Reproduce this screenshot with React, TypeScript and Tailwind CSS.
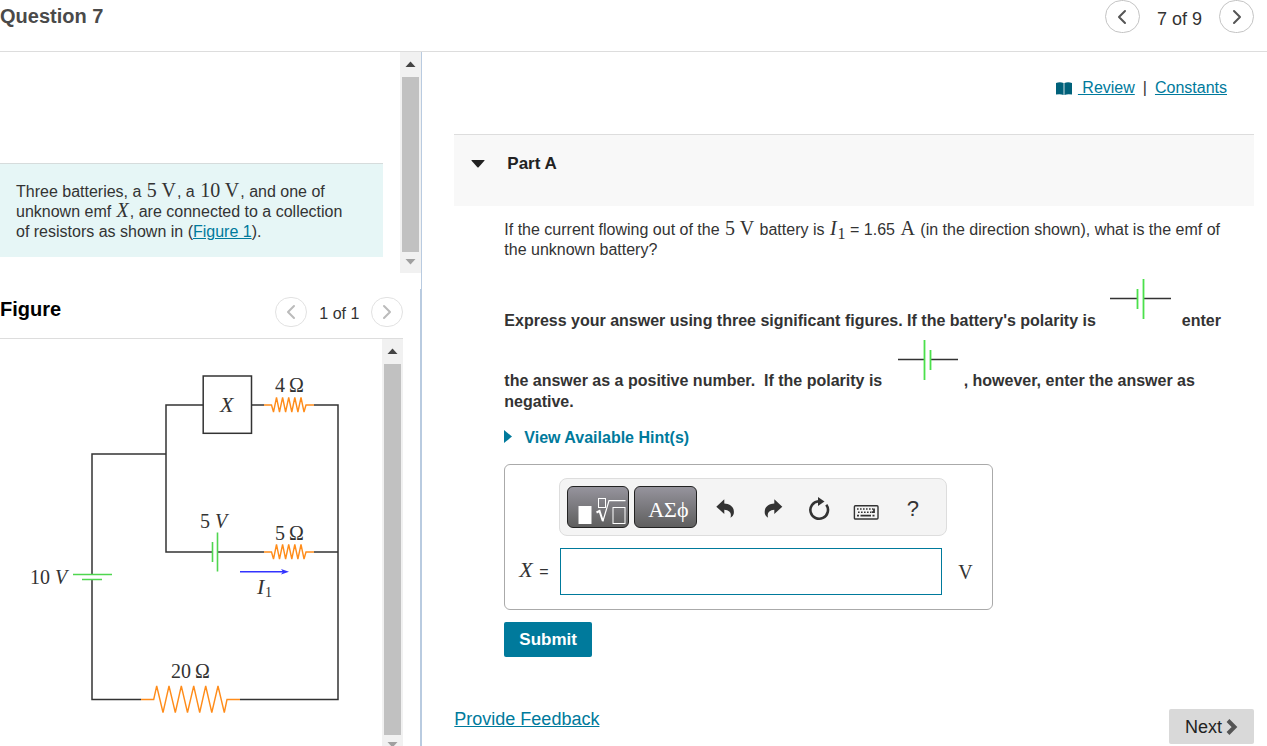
import React, { useState } from 'react';
import { ChevronLeft, ChevronRight } from 'lucide-react';

export default function App() {
  return (
    <div className="flex min-h-screen flex-col bg-white font-['Liberation_Sans',Arial,sans-serif] text-base leading-5 text-[#333]">
      <Header />
      <main className="flex flex-1">
        <aside className="flex w-1/3 shrink-0 flex-col border-r border-[#b9cbe0]">
          <Problem />
          <Figure />
        </aside>
        <Question />
      </main>
    </div>
  );
}

function Header() {
  return (
    <header className="flex h-[52px] items-start justify-between border-b border-[#ddd] pr-[13px]">
      <h1 className="pt-1 text-xl leading-6 font-bold text-[#4a4a4a]">Question 7</h1>
      <nav className="flex items-center gap-[17px] text-lg">
        <PagerButton label="Previous question" direction="left" />
        <span className="pt-1">7 of 9</span>
        <PagerButton label="Next question" direction="right" />
      </nav>
    </header>
  );
}

function PagerButton({ label, direction }: { label: string, direction: 'left' | 'right' }) {
  const Icon = direction === 'left' ? ChevronLeft : ChevronRight;

  return (
    <button aria-label={label} className="flex h-[33px] w-[35px] items-center justify-center rounded-full border border-[#c4c4c4] bg-white text-[#555]">
      <Icon size={24} strokeWidth={2} />
    </button>
  );
}

function ScrollBar({ cut = false }: { cut?: boolean }) {
  return (
    <div className="flex w-[21px] shrink-0 flex-col items-center bg-[#f1f1f1]">
      <svg width="21" height="25" viewBox="0 0 21 25" className="shrink-0">
        <path d="M5.5 15 L10.5 9.5 L15.5 15 Z" fill="#444" />
      </svg>
      <div className="w-[17px] flex-1 bg-[#c1c1c1]" />
      <svg width="21" height={cut ? 11 : 21} viewBox={cut ? '0 0 21 11' : '0 0 21 21'} className="shrink-0">
        <path d="M5.5 7 L15.5 7 L10.5 12.5 Z" fill="#a0a0a0" />
      </svg>
    </div>
  );
}

// quantities are set in serif, zero leading keeps them from growing the line
function Num({ children }: { children: React.ReactNode }) {
  return <span className="px-px font-['Liberation_Serif',serif] text-xl leading-0">{children}</span>;
}

function Problem() {
  return (
    <section className="flex h-[221px]">
      <div className="flex-1 pt-[111px] pr-[17px]">
        <p className="border-t border-[#d6dcdc] bg-[#e6f6f6] pt-[18px] pr-7 pb-[15px] pl-4">
          Three batteries, a <Num>5 V</Num>, a <Num>10 V</Num>, and one of unknown emf <Num><i>X</i></Num>, are connected to a collection of resistors as shown in (<a href="#figure" className="text-[#007a9c] underline">Figure 1</a>).
        </p>
      </div>
      <ScrollBar />
    </section>
  );
}

function Figure() {
  return (
    <section id="figure" className="mt-4 flex flex-1 flex-col border-r border-[#b9cbe0] pr-[17px]">
      <div className="flex h-[50px] items-start justify-between border-b border-[#ddd] pt-2">
        <h2 className="text-xl leading-6 font-bold text-black">Figure</h2>
        <div className="flex items-center gap-3">
          <FigureButton label="Previous figure" direction="left" />
          <span className="pt-1">1 of 1</span>
          <FigureButton label="Next figure" direction="right" />
        </div>
      </div>
      <div className="flex flex-1">
        <div className="flex-1">
          <Circuit />
        </div>
        <ScrollBar cut />
      </div>
    </section>
  );
}

function FigureButton({ label, direction }: { label: string, direction: 'left' | 'right' }) {
  const Icon = direction === 'left' ? ChevronLeft : ChevronRight;

  return (
    <button aria-label={label} className="flex h-[30px] w-8 items-center justify-center rounded-full border border-[#e2e2e2] bg-white text-[#bbb]">
      <Icon size={24} strokeWidth={2} />
    </button>
  );
}

function Circuit() {
  return (
    <svg width="382" height="400" viewBox="0 0 382 400" fill="none" role="img" aria-label="Circuit diagram" className="block">
      <g stroke="#333" strokeWidth="1.5">
        <rect x="203.2" y="37" width="48.3" height="57.3" />
        <path d="M203 66 H166 V213 H212.5" />
        <path d="M251.5 66 H264" />
        <path d="M314 66 H338 V360.5 H240" />
        <path d="M166 115 H92 V235.5" />
        <path d="M92 240.5 V360.5 H141" />
        <path d="M217.5 213 H264 M314 213 H338" />
      </g>
      <g stroke="#ff8c1a" strokeWidth="1.4">
        <path d="M264 66 H271.5 L273.5 73 L276.5 58.5 L279.5 73 L282.6 58.5 L285.6 73 L288.7 58.5 L291.8 73 L294.8 58.5 L297.9 73 L301 58.5 L304 73 L306 66 H314" />
        <path d="M264 213 H271.5 L273.5 220 L276.5 205.5 L279.5 220 L282.6 205.5 L285.6 220 L288.7 205.5 L291.8 220 L294.8 205.5 L297.9 220 L301 205.5 L304 220 L306 213 H314" />
        <path d="M141 360.5 H153.7 L156.7 347 L163 373.5 L169 347 L175.3 373.5 L181.3 347 L187.5 373.5 L193.7 347 L199.7 373.5 L205.7 347 L211.8 373.5 L218 347 L224.3 373.5 L227 360.5 H240" />
      </g>
      <g stroke="#4fd64f" strokeWidth="1.6">
        <path d="M212.5 203 V223 M217.5 193.5 V232.5" />
        <path d="M73 235.5 H112 M82 240.5 H102" />
      </g>
      <path d="M240 232.7 H283" stroke="#3333ff" strokeWidth="1.6" />
      <path d="M281 230 L289 232.7 L281 235.4 L283 232.7 Z" fill="#3333ff" />
      <g fill="#333" fontFamily="Liberation Serif, serif" fontSize="20">
        <text x="275" y="53">4&#8201;Ω</text>
        <text x="220" y="73" fontSize="22" fontStyle="italic">X</text>
        <text x="200" y="189">5 <tspan fontStyle="italic">V</tspan></text>
        <text x="275" y="201">5&#8201;Ω</text>
        <text x="30" y="245">10 <tspan fontStyle="italic">V</tspan></text>
        <text x="257" y="255" fontSize="22" fontStyle="italic">I</text>
        <text x="265" y="258" fontSize="14">1</text>
        <text x="171" y="339">20&#8201;Ω</text>
      </g>
    </svg>
  );
}

function Question() {
  const [open, setOpen] = useState(true);

  return (
    <section className="flex min-w-0 flex-1 flex-col pr-[13px] pl-8">
      <div className="flex items-center justify-end pt-[26px] pr-[27px]">
        <BookIcon />
        <a href="#review" className="pl-[6px] whitespace-pre text-[#007a9c] underline"> Review</a>
        <span className="px-2">|</span>
        <a href="#constants" className="text-[#007a9c] underline">Constants</a>
      </div>

      <div className="mt-9 h-[72px] border-t border-[#ddd] bg-[#f8f8f8]">
        <button onClick={() => setOpen(!open)} aria-expanded={open} className="flex items-center gap-[22px] pt-[19px] pl-[17px] text-[17px] font-bold text-[#222]">
          <svg width="14" height="8" viewBox="0 0 14 8">
            <path d="M1 0 H13 Q14 0 13.4 .8 L7.6 7.2 Q7 7.8 6.4 7.2 L.6 .8 Q0 0 1 0 Z" fill="#222" />
          </svg>
          Part A
        </button>
      </div>

      {open && (
        <div className="pt-[14px] pr-6 pl-[50px]">
          <p>
            If the current flowing out of the <Num>5 V</Num> battery is <Num><i>I</i></Num><sub className="font-['Liberation_Serif',serif] text-[16px] leading-0">1</sub> = 1.65 <Num>A</Num> (in the direction shown), what is the emf of the unknown battery?
          </p>
          <p className="mt-[11px] leading-[21px] font-bold">
            Express your answer using three significant figures. If the battery's polarity is <Battery /> enter the answer as a positive number.&nbsp; If the polarity is <Battery flipped />, however, enter the answer as negative.
          </p>
          <button className="mt-4 flex items-center gap-3 font-bold text-[#007a9c]">
            <svg width="8" height="13" viewBox="0 0 8 13" className="mb-1">
              <path d="M0 0 L8 6.5 L0 13 Z" fill="#007a9c" />
            </svg>
            View Available Hint(s)
          </button>
          <AnswerBox />
          <button className="mt-3 h-[35px] rounded-xs bg-[#007a9c] px-[15px] text-[17px] font-bold text-white">Submit</button>
        </div>
      )}

      <footer className="mt-auto flex items-start justify-between pb-[2px]">
        <a href="#feedback" className="text-lg leading-5 text-[#007a9c] underline">Provide Feedback</a>
        <button className="flex h-[35px] items-center gap-1 rounded-xs bg-[#d9d9d9] px-4 text-lg text-[#222]">
          Next
          <svg width="12" height="16" viewBox="0 0 12 16" fill="none">
            <path d="M2 1.5 L8.5 8 L2 14.5" stroke="#555" strokeWidth="4" />
          </svg>
        </button>
      </footer>
    </section>
  );
}

function Battery({ flipped = false }: { flipped?: boolean }) {
  return (
    <svg width="77" height="55" viewBox="0 1 77 55" fill="none" role="img" aria-label={flipped ? 'Battery, long plate on the left' : 'Battery, long plate on the right'} className="inline-block align-baseline">
      <path d={flipped ? 'M11 29.5 H37 M43 29.5 H71' : 'M10 28.5 H37 M43 28.5 H71'} stroke="#333" strokeWidth="1.5" />
      <path d={flipped ? 'M37.5 10 V50 M43.5 20 V40' : 'M37.5 19 V39 M43.5 9 V49'} stroke="#4be04b" strokeWidth="1.8" />
    </svg>
  );
}

function BookIcon() {
  return (
    <svg width="16" height="13" viewBox="0 0 16 13" fill="#00617a">
      <path d="M0 1 Q4 -.6 7.6 1 V13 Q4 11.6 0 12.6 Z" />
      <path d="M8.4 1 Q12 -.6 16 1 V12.6 Q12 11.6 8.4 13 Z" />
    </svg>
  );
}

function AnswerBox() {
  const [value, setValue] = useState('');

  return (
    <div className="mt-4 w-fit rounded-md border border-[#aaa] px-[14px] pt-[13px] pb-[14px]">
      <div className="ml-10 flex h-[58px] w-[388px] items-center rounded-lg border border-[#ddd] bg-[#f4f4f4] pl-[7px]">
        <button aria-label="Templates" className="flex h-[42px] w-[62px] shrink-0 items-end rounded-md border border-[#222] bg-linear-to-b from-[#96949d] to-[#5f5f5f]">
          <svg width="60" height="40" viewBox="0 0 60 40" fill="none" stroke="#fff">
            <rect x="10.5" y="19" width="13" height="18" fill="#fff" stroke="none" />
            <rect x="30.5" y="11.5" width="7" height="9" />
            <path d="M28.5 25.5 L31.5 24 L34.8 34" strokeWidth="2" />
            <path d="M34.8 34.5 L41 13.7 H57.5" strokeWidth="1.2" />
            <rect x="45" y="20.5" width="12" height="16" />
          </svg>
        </button>
        <button aria-label="Symbols" className="ml-[5px] h-[42px] w-[63px] shrink-0 rounded-md border border-[#222] bg-linear-to-b from-[#96949d] to-[#5f5f5f] pt-[6px] pl-[5px] font-['Liberation_Serif',serif] text-[22px] text-white">
          ΑΣϕ
        </button>
        <div className="ml-1 flex items-center">
          <ToolButton label="Undo">
            <path d="M2.3 10.7 L10.3 3.3 V7.5 C16 7.8 21 11 19.7 18 Q19 20.5 16.5 21.7 Q18.5 14.5 10.3 13.7 V18 Z" fill="#333" />
          </ToolButton>
          <ToolButton label="Redo">
            <path d="M21.3 10.7 L13.3 3.3 V7.5 C7.6 7.8 2.6 11 3.9 18 Q4.6 20.5 7.1 21.7 Q5.1 14.5 13.3 13.7 V18 Z" fill="#333" />
          </ToolButton>
          <ToolButton label="Reset">
            <path d="M10.5 5.2 A8.8 8.8 0 1 0 18.3 8.8" stroke="#333" strokeWidth="2.6" />
            <path d="M10 1 L16.5 5.5 L10 10 Z" fill="#333" />
          </ToolButton>
          <ToolButton label="Keyboard">
            <rect x="-.6" y="9.7" width="23.6" height="13.3" rx="1" stroke="#333" strokeWidth="1.4" />
            <path d="M2 13 H18 M3 16.2 H16" stroke="#333" strokeWidth="1.6" strokeDasharray="1.6 1.4" />
            <path d="M2 19.6 H4 M5.5 19.6 H16 M17.5 19.6 H19.5" stroke="#333" strokeWidth="1.6" />
            <path d="M19 12.5 V16.2 H16.5" stroke="#333" strokeWidth="1.8" />
          </ToolButton>
          <button aria-label="Help" className="w-[47px] pt-1 text-[22px]">?</button>
        </div>
      </div>
      <div className="mt-3 flex items-center">
        <label htmlFor="answer" className="w-[41px] whitespace-nowrap">
          <span className="pr-[2px] font-['Liberation_Serif',serif] text-[22px] leading-0 italic">X</span> =
        </label>
        <input
          id="answer"
          value={value}
          onChange={e => setValue(e.target.value)}
          className="h-[47px] w-[382px] border border-[#007a9c] bg-white px-2 outline-none"
        />
        <span className="w-9 pl-4 font-['Liberation_Serif',serif] text-xl">V</span>
      </div>
    </div>
  );
}

function ToolButton({ label, children }: { label: string, children: React.ReactNode }) {
  return (
    <button aria-label={label} className="flex w-[47px] shrink-0 items-center justify-center">
      <svg width="22" height="22" viewBox="0 0 22 22" fill="none" className="overflow-visible">
        {children}
      </svg>
    </button>
  );
}
